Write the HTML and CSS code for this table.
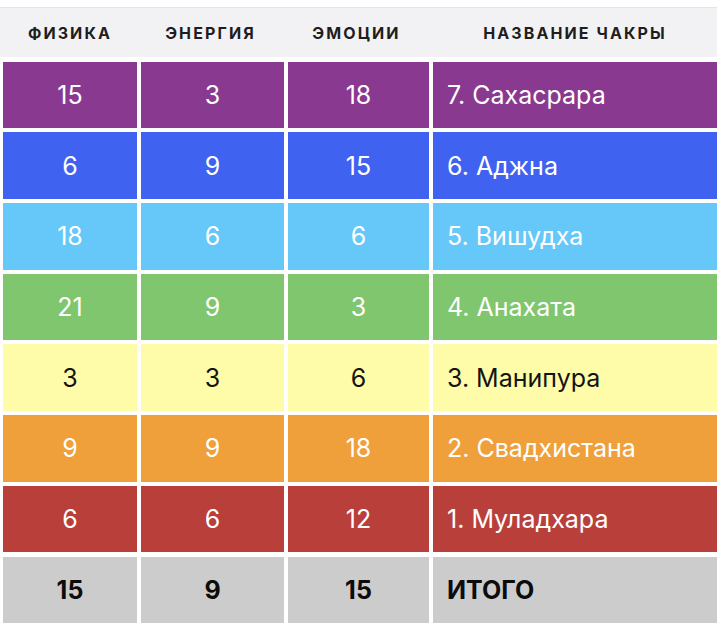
FILE: index.html
```html
<!DOCTYPE html>
<html lang="ru">
<head>
<meta charset="utf-8">
<title>Чакры</title>
<link rel="stylesheet" href="styles.css">
</head>
<body>
<div class="table">
  <div class="head">
    <div class="th">Физика</div>
    <div class="th">Энергия</div>
    <div class="th">Эмоции</div>
    <div class="th">Название чакры</div>
  </div>
  <div class="body">
    <div class="row purple"><div class="td">15</div><div class="td">3</div><div class="td">18</div><div class="td name">7. Сахасрара</div></div>
    <div class="row blue"><div class="td">6</div><div class="td">9</div><div class="td">15</div><div class="td name">6. Аджна</div></div>
    <div class="row sky"><div class="td">18</div><div class="td">6</div><div class="td">6</div><div class="td name">5. Вишудха</div></div>
    <div class="row green"><div class="td">21</div><div class="td">9</div><div class="td">3</div><div class="td name">4. Анахата</div></div>
    <div class="row yellow"><div class="td">3</div><div class="td">3</div><div class="td">6</div><div class="td name">3. Манипура</div></div>
    <div class="row orange"><div class="td">9</div><div class="td">9</div><div class="td">18</div><div class="td name">2. Свадхистана</div></div>
    <div class="row red"><div class="td">6</div><div class="td">6</div><div class="td">12</div><div class="td name">1. Муладхара</div></div>
    <div class="row total"><div class="td">15</div><div class="td">9</div><div class="td">15</div><div class="td name">ИТОГО</div></div>
  </div>
</div>
</body>
</html>
```
FILE: styles.css
```css
html, body {
  margin: 0;
  padding: 0;
  background: #ffffff;
}
body {
  font-family: Inter, "Noto Sans", "Liberation Sans", sans-serif;
}
.table {
  width: 717px;
  padding-top: 7px;
}
.head {
  display: grid;
  grid-template-columns: 137px 147px 145px 288px;
  height: 49px;
  background: #f2f2f4;
  border-top: 1px solid #e4e4e6;
  align-items: center;
}
.th {
  text-align: center;
  text-transform: uppercase;
  font-weight: 700;
  font-size: 16px;
  letter-spacing: 2.1px;
  color: #1e1e20;
}
.head .th:first-child { padding-left: 3px; }
.head .th:last-child { padding-left: 4px; }
.body {
  display: flex;
  flex-direction: column;
  gap: 4.2px;
  padding: 4.7px 0 0 3px;
}
.row {
  display: grid;
  grid-template-columns: 134px 143px 141px 284px;
  column-gap: 4px;
  height: 66.5px;
}
.td {
  display: flex;
  align-items: center;
  justify-content: center;
  font-size: 25px;
  color: #ffffff;
}
.td.name {
  justify-content: flex-start;
  padding-left: 14px;
}
.purple .td { background: #8a3990; }
.blue .td { background: #3f63f0; }
.sky .td { background: #66c7f9; }
.green .td { background: #80c66f; }
.yellow .td { background: #fefca8; color: #141414; }
.orange .td { background: #f0a03b; }
.red .td { background: #b9403a; }
.total .td { background: #cccccc; color: #0c0c0c; font-weight: 700; }
```
